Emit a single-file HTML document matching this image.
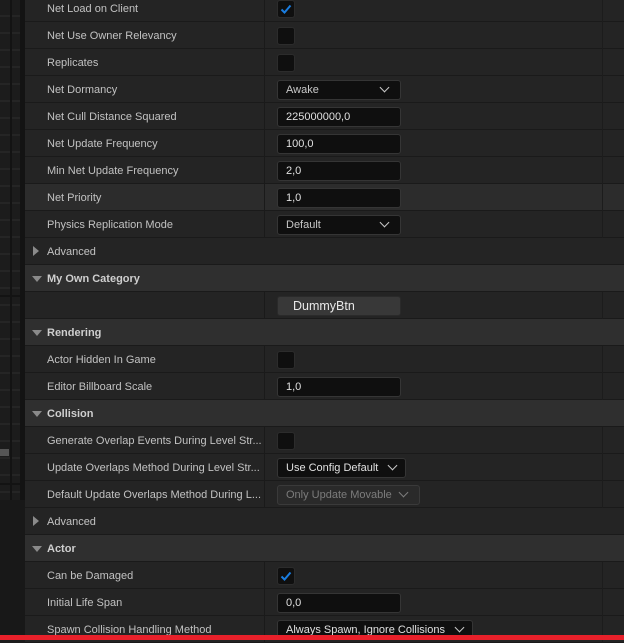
<!DOCTYPE html>
<html><head><meta charset="utf-8"><style>
*{margin:0;padding:0;box-sizing:border-box}
body{width:624px;height:640px;overflow:hidden;background:#1c1c1c;font-family:"Liberation Sans",sans-serif;font-size:11px;color:#c2c2c2;position:relative}
.strip{position:absolute;left:0;top:0;width:25px;height:500px;background:#1c1c1c;
background-image:repeating-linear-gradient(to bottom,transparent 0 15px,#252525 15px 17px);}
.strip2{position:absolute;left:0;top:500px;width:25px;height:140px;background:#181818}
.vl{position:absolute;top:0;height:500px;background:#131313}
.row{position:absolute;left:25px;width:599px;height:27px;background:#242424;border-bottom:1px solid #1a1a1a}
.row .lab{position:absolute;left:22px;top:8px;white-space:nowrap}
.row .div{position:absolute;left:239px;top:0;width:1px;height:27px;background:#1a1a1a}
.row .div2{position:absolute;left:577px;top:0;width:1px;height:27px;background:#1c1c1c}
.cat{background:#2f2f2f}
.cat .lab{font-weight:bold;color:#cfcfcf}
.tri{position:absolute;left:7px;top:11px;width:0;height:0;border-left:5px solid transparent;border-right:5px solid transparent;border-top:6px solid #8a8a8a}
.trir{position:absolute;left:8px;top:8px;width:0;height:0;border-top:5px solid transparent;border-bottom:5px solid transparent;border-left:6px solid #8a8a8a}
.cb{position:absolute;left:252px;top:5px;width:18px;height:18px;background:#0f0f0f;border:1px solid #2c2c2c;border-radius:3px}
.inp{position:absolute;left:252px;top:4px;width:124px;height:20px;background:#0f0f0f;border:1px solid #353535;border-radius:3px;color:#e0e0e0;padding:3px 0 0 8px}
.dd{color:#c8c8c8}
.chev{position:absolute;right:12px;top:3px;width:7px;height:7px;border-right:1.5px solid #c8c8c8;border-bottom:1.5px solid #c8c8c8;transform:rotate(45deg)}
.red{position:absolute;left:0;top:635px;width:624px;height:5px;background:#e8202a}
</style></head><body>
<div class="strip"></div><div class="strip2"></div>
<div class="vl" style="left:10px;width:2px"></div>
<div class="vl" style="left:20px;width:5px"></div>
<div style="position:absolute;left:0;top:295px;width:25px;height:2px;background:#131313"></div>
<div style="position:absolute;left:0;top:483px;width:25px;height:2px;background:#131313"></div>
<div style="position:absolute;left:0;top:449px;width:9px;height:7px;background:#555"></div>

<div class="row" style="top:-5px"><span class="lab">Net Load on Client</span><div class="div"></div><div class="div2"></div><div class="cb"><svg width="16" height="16" style="position:absolute;left:0;top:0"><path d="M3.5 8.5 L6.5 11.5 L12.5 4.5" stroke="#1a7de0" stroke-width="2" fill="none"/></svg></div></div>
<div class="row" style="top:22px"><span class="lab">Net Use Owner Relevancy</span><div class="div"></div><div class="div2"></div><div class="cb"></div></div>
<div class="row" style="top:49px"><span class="lab">Replicates</span><div class="div"></div><div class="div2"></div><div class="cb"></div></div>
<div class="row" style="top:76px"><span class="lab">Net Dormancy</span><div class="div"></div><div class="div2"></div><div class="inp dd">Awake<span class="chev"></span></div></div>
<div class="row" style="top:103px"><span class="lab">Net Cull Distance Squared</span><div class="div"></div><div class="div2"></div><div class="inp">225000000,0</div></div>
<div class="row" style="top:130px"><span class="lab">Net Update Frequency</span><div class="div"></div><div class="div2"></div><div class="inp">100,0</div></div>
<div class="row" style="top:157px"><span class="lab">Min Net Update Frequency</span><div class="div"></div><div class="div2"></div><div class="inp">2,0</div></div>
<div class="row" style="top:184px;background:#2c2c2c"><span class="lab">Net Priority</span><div class="div"></div><div class="div2"></div><div class="inp">1,0</div></div>
<div class="row" style="top:211px"><span class="lab">Physics Replication Mode</span><div class="div"></div><div class="div2"></div><div class="inp dd">Default<span class="chev"></span></div></div>
<div class="row" style="top:238px"><span class="trir"></span><span class="lab">Advanced</span></div>
<div class="row cat" style="top:265px"><span class="tri"></span><span class="lab">My Own Category</span></div>
<div class="row" style="top:292px"><div class="div"></div><div class="div2"></div><div class="inp" style="background:#383838;border-color:#2a2a2a;font-size:12.5px;padding:2px 0 0 15px;color:#e8e8e8">DummyBtn</div></div>
<div class="row cat" style="top:319px"><span class="tri"></span><span class="lab">Rendering</span></div>
<div class="row" style="top:346px"><span class="lab">Actor Hidden In Game</span><div class="div"></div><div class="div2"></div><div class="cb"></div></div>
<div class="row" style="top:373px"><span class="lab">Editor Billboard Scale</span><div class="div"></div><div class="div2"></div><div class="inp">1,0</div></div>
<div class="row cat" style="top:400px"><span class="tri"></span><span class="lab">Collision</span></div>
<div class="row" style="top:427px"><span class="lab">Generate Overlap Events During Level Str...</span><div class="div"></div><div class="div2"></div><div class="cb"></div></div>
<div class="row" style="top:454px"><span class="lab">Update Overlaps Method During Level Str...</span><div class="div"></div><div class="div2"></div><div class="inp dd" style="width:129px;color:#e0e0e0">Use Config Default<span class="chev" style="right:9px"></span></div></div>
<div class="row" style="top:481px"><span class="lab">Default Update Overlaps Method During L...</span><div class="div"></div><div class="div2"></div><div class="inp dd" style="width:143px;background:#2a2a2a;border-color:#3a3a3a;color:#7c7c7c">Only Update Movable<span class="chev" style="right:12px;border-right-color:#7c7c7c;border-bottom-color:#7c7c7c"></span></div></div>
<div class="row" style="top:508px"><span class="trir"></span><span class="lab">Advanced</span></div>
<div class="row cat" style="top:535px"><span class="tri"></span><span class="lab">Actor</span></div>
<div class="row" style="top:562px"><span class="lab">Can be Damaged</span><div class="div"></div><div class="div2"></div><div class="cb"><svg width="16" height="16" style="position:absolute;left:0;top:0"><path d="M3.5 8.5 L6.5 11.5 L12.5 4.5" stroke="#1a7de0" stroke-width="2" fill="none"/></svg></div></div>
<div class="row" style="top:589px"><span class="lab">Initial Life Span</span><div class="div"></div><div class="div2"></div><div class="inp">0,0</div></div>
<div class="row" style="top:616px"><span class="lab">Spawn Collision Handling Method</span><div class="div"></div><div class="div2"></div><div class="inp dd" style="width:196px;color:#e0e0e0">Always Spawn, Ignore Collisions<span class="chev" style="right:9px"></span></div></div>
<div class="red"></div>
</body></html>
